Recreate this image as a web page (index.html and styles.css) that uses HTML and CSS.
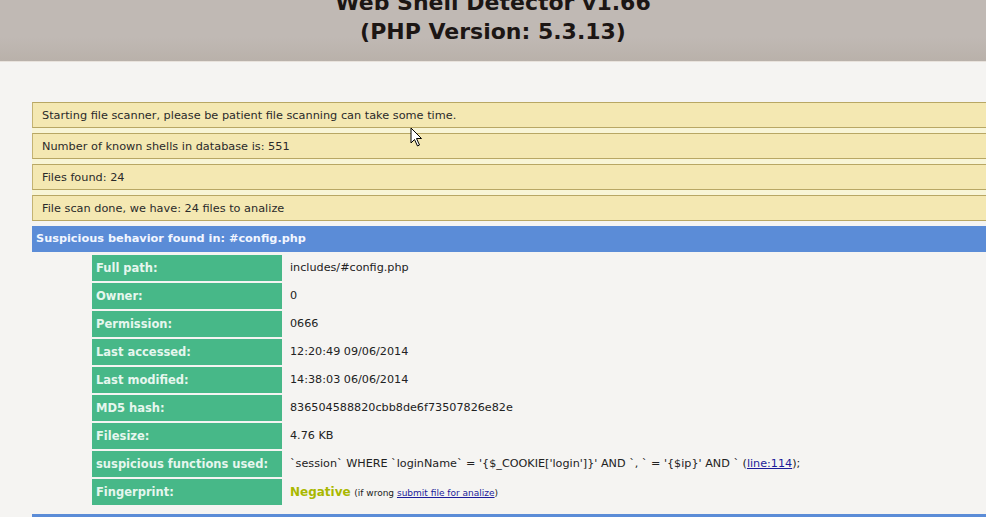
FILE: index.html
```html
<!DOCTYPE html>
<html>
<head>
<meta charset="utf-8">
<link rel="stylesheet" href="styles.css">
</head>
<body>
<header class="head">
  <h1 class="title"><span>Web Shell Detector v1.66</span><span>(PHP Version: 5.3.13)</span></h1>
</header>
<main class="main">
  <div class="msgs">
    <div class="msg">Starting file scanner, please be patient file scanning can take some time.</div>
    <div class="msg">Number of known shells in database is: 551</div>
    <div class="msg">Files found: 24</div>
    <div class="msg">File scan done, we have: 24 files to analize</div>
  </div>
  <div class="bar">Suspicious behavior found in: #config.php</div>
  <div class="info">
    <div class="lbl">Full path:</div><div class="val">includes/#config.php</div>
    <div class="lbl">Owner:</div><div class="val">0</div>
    <div class="lbl">Permission:</div><div class="val">0666</div>
    <div class="lbl">Last accessed:</div><div class="val">12:20:49 09/06/2014</div>
    <div class="lbl">Last modified:</div><div class="val">14:38:03 06/06/2014</div>
    <div class="lbl">MD5 hash:</div><div class="val">836504588820cbb8de6f73507826e82e</div>
    <div class="lbl">Filesize:</div><div class="val">4.76 KB</div>
    <div class="lbl">suspicious functions used:</div><div class="val">`session` WHERE `loginName` = '{$_COOKIE['login']}' AND `, ` = '{$ip}' AND ` (<a class="link" href="#">line:114</a>);</div>
    <div class="lbl">Fingerprint:</div><div class="val"><span class="neg">Negative</span> <span class="small">(if wrong <a class="link" href="#">submit file for analize</a>)</span></div>
  </div>
  <div class="bar bar-next"></div>
  <svg class="cursor" width="13" height="21" viewBox="0 0 13 21"><path d="M1 1 L1 16 L4.5 12.5 L7.5 19 L9.5 18 L6.5 11.5 L11.5 11.5 Z" fill="#fff" stroke="#000" stroke-width="1" stroke-linejoin="miter"/></svg>
</main>
</body>
</html>
```
FILE: styles.css
```css
html, body {
  margin: 0;
  padding: 0;
}
body {
  background: #f5f4f2;
  font-family: "DejaVu Sans", Verdana, sans-serif;
  overflow: hidden;
  height: 517px;
}
.head {
  height: 61px;
  background: linear-gradient(#c0b9b4, #c0b9b4 60%, #b9b1aa);
  border-bottom: 1px solid #e8e2dc;
  overflow: hidden;
}
.title {
  margin: 0;
  margin-top: -12px;
  display: flex;
  flex-direction: column;
  align-items: center;
  font-size: 22px;
  line-height: 29px;
  font-weight: bold;
  color: #1c1614;
}
.main {
  position: relative;
  padding-left: 32px;
  padding-top: 40px;
}
.msgs {
  display: flex;
  flex-direction: column;
  gap: 5px;
  background: #f8f5d6;
}
.msg {
  height: 24px;
  line-height: 25px;
  background: #f4e8b2;
  border-top: 1px solid #b8a764;
  border-bottom: 1px solid #b8a764;
  border-left: 1px solid #c4b372;
  padding-left: 9px;
  font-size: 11.3px;
  color: #2a2a2a;
}
.bar {
  margin-top: 5px;
  height: 26px;
  line-height: 26px;
  background: #5b8cd7;
  color: #f2f6ff;
  font-weight: bold;
  font-size: 11.3px;
  padding-left: 4px;
}
.info {
  margin-top: 3px;
  margin-left: 60px;
  display: grid;
  grid-template-columns: 190px 1fr;
  row-gap: 2px;
}
.lbl {
  height: 26px;
  line-height: 26px;
  background: #47b888;
  color: #e6f6ee;
  font-weight: bold;
  font-size: 11.5px;
  padding-left: 4px;
}
.val {
  height: 26px;
  line-height: 26px;
  padding-left: 8px;
  font-size: 11.2px;
  color: #222;
  white-space: nowrap;
}
.link {
  color: #1c1c9a;
  text-decoration: underline;
}
.neg {
  color: #a9b800;
  font-weight: bold;
  font-size: 12px;
}
.small {
  font-size: 9px;
}
.bar-next {
  margin-top: 9px;
}
.cursor {
  position: absolute;
  left: 410px;
  top: 65px;
}
```
